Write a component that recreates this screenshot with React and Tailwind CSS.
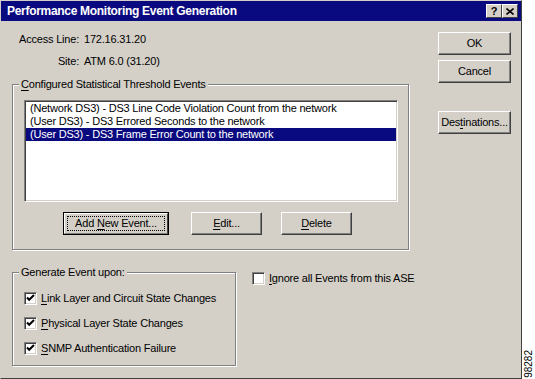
import React from "react";

const BG = "bg-[#d4d0c8]";

function Raised({ children, w = "w-[73px]", className = "" }) {
  return (
    <div
      className={`${w} h-[23px] ${BG} border border-t-white border-l-white border-r-[#404040] border-b-[#404040] shadow-[inset_-1px_-1px_0_#808080] flex items-center justify-center text-black ${className}`}
    >
      <span>{children}</span>
    </div>
  );
}

function DefaultBtn({ children, w = "w-[106px]" }) {
  return (
    <div className={`${w} h-[23px] border border-black flex`}>
      <div className={`flex-1 ${BG} border border-t-white border-l-white border-r-[#404040] border-b-[#808080] flex p-[2px]`}>
        <div className="flex-1 border border-dotted border-black flex items-center justify-center">
          <span>{children}</span>
        </div>
      </div>
    </div>
  );
}

function Check({ checked }) {
  return (
    <div className="w-[13px] h-[13px] shrink-0 bg-white border border-t-[#808080] border-l-[#808080] border-b-white border-r-white shadow-[inset_1px_1px_0_#404040,inset_-1px_-1px_0_#d4d0c8] flex items-center justify-center">
      {checked && (
        <svg width="11" height="11" viewBox="0 0 11 11">
          <path d="M2 4.5 L4.2 6.8 L9 2" stroke="#000" strokeWidth="2" fill="none" />
        </svg>
      )}
    </div>
  );
}

function Group({ label, className = "", children }) {
  return (
    <div
      className={`relative border border-[#808080] shadow-[inset_1px_1px_0_#fff,1px_1px_0_#fff] ${className}`}
    >
      <div className={`absolute top-[-7px] left-[6px] px-[2px] ${BG} leading-[13px]`}>{label}</div>
      {children}
    </div>
  );
}

const U = ({ children }) => <span className="underline underline-offset-[2px]">{children}</span>;

export default function App() {
  return (
    <div className="w-[535px] h-[379px] flex bg-white font-['Liberation_Sans',Arial,sans-serif] text-[11px] leading-[13px] tracking-[-0.2px] text-black">
      <div className={`w-[522px] h-[379px] ${BG} border border-t-[#d4d0c8] border-l-[#d4d0c8] border-r-[#404040] border-b-[#404040] flex flex-col`}>
        {/* Title bar */}
        <div className="h-[20px] bg-[#0a0a80] flex items-center pl-[6px] pr-[3px]">
          <span className="text-white font-bold text-[12px] leading-[14px] tracking-[-0.3px]">Performance Monitoring Event Generation</span>
          <div className="ml-auto flex">
            <div className={`w-[16px] h-[14px] ${BG} border border-t-white border-l-white border-r-[#404040] border-b-[#404040] flex items-center justify-center font-bold text-[11px] leading-[11px]`}>?</div>
            <div className={`w-[16px] h-[14px] ${BG} border border-t-white border-l-white border-r-[#404040] border-b-[#404040] flex items-center justify-center`}>
              <svg width="8" height="7" viewBox="0 0 8 7">
                <path d="M0.5 0.5 L7.5 6.5 M7.5 0.5 L0.5 6.5" stroke="#000" strokeWidth="1.6" />
              </svg>
            </div>
          </div>
        </div>

        {/* Body */}
        <div className="flex flex-1">
          {/* Left column */}
          <div className="pl-[11px] pt-[12px] flex flex-col">
            <div className="flex">
              <span className="w-[67px] text-right">Access Line:</span>
              <span className="ml-[5px]">172.16.31.20</span>
            </div>
            <div className="flex mt-[9px]">
              <span className="w-[67px] text-right">Site:</span>
              <span className="ml-[5px]">ATM 6.0 (31.20)</span>
            </div>

            <Group
              label={<><U>C</U>onfigured Statistical Threshold Events</>}
              className="mt-[16px] w-[397px] pl-[11px] pt-[15px] pb-[14px]"
            >
              <div className="w-[374px] h-[102px] bg-white border border-t-[#808080] border-l-[#808080] border-b-white border-r-white shadow-[inset_1px_1px_0_#404040,inset_-1px_-1px_0_#d4d0c8] p-[1px] flex flex-col">
                <div className="h-[13px] pl-[4px] whitespace-nowrap">(Network DS3) - DS3 Line Code Violation Count from the network</div>
                <div className="h-[13px] pl-[4px] whitespace-nowrap">(User DS3) - DS3 Errored Seconds to the network</div>
                <div className="h-[13px] pl-[4px] whitespace-nowrap bg-[#0a0a80] text-white">(User DS3) - DS3 Frame Error Count to the network</div>
              </div>
              <div className="flex mt-[10px] pl-[39px]">
                <DefaultBtn>Add <U>N</U>ew Event...</DefaultBtn>
                <Raised w="w-[71px]" className="ml-[22px]"><U>E</U>dit...</Raised>
                <Raised w="w-[71px]" className="ml-[19px]"><U>D</U>elete</Raised>
              </div>
            </Group>

            <div className="flex items-start mt-[22px]">
              <Group label="Generate Event upon:" className="w-[224px] pl-[11px] pt-[19px] pb-[10px]">
                <div className="flex flex-col gap-[12px]">
                  <div className="flex items-center gap-[4px]">
                    <Check checked />
                    <span><U>L</U>ink Layer and Circuit State Changes</span>
                  </div>
                  <div className="flex items-center gap-[4px]">
                    <Check checked />
                    <span><U>P</U>hysical Layer State Changes</span>
                  </div>
                  <div className="flex items-center gap-[4px]">
                    <Check checked />
                    <span><U>S</U>NMP Authentication Failure</span>
                  </div>
                </div>
              </Group>
              <div className="flex items-center gap-[4px] ml-[16px]">
                <Check />
                <span><U>I</U>gnore all Events from this ASE</span>
              </div>
            </div>
          </div>

          {/* Right column */}
          <div className="ml-auto pr-[10px] pt-[11px] flex flex-col">
            <Raised>OK</Raised>
            <Raised className="mt-[5px]">Cancel</Raised>
            <Raised className="mt-[28px]">Des<U>t</U>inations...</Raised>
          </div>
        </div>
      </div>

      {/* Side strip */}
      <div className="flex-1 bg-white flex flex-col justify-end items-center pb-[1px]">
        <span className="[writing-mode:vertical-rl] rotate-180 text-[10px] leading-[11px] tracking-normal">98282</span>
      </div>
    </div>
  );
}
